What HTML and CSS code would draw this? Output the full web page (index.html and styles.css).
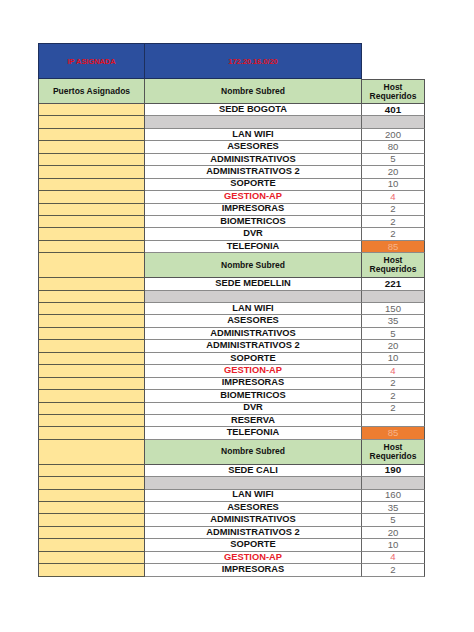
FILE: index.html
```html
<!DOCTYPE html>
<html>
<head>
<meta charset="utf-8">
<link rel="stylesheet" href="styles.css">
</head>
<body>
<div class="sheet">
  <div class="blue c1">IP ASIGNADA</div>
  <div class="blue c2">172.20.16.0/20</div>
  <div class="blank"></div>

  <div class="c1 hdr">Puertos Asignados</div>
  <div class="c2 hdr">Nombre Subred</div>
  <div class="c3 hdr">Host<br>Requeridos</div>

  <div class="y"></div><div class="n sede">SEDE BOGOTA</div><div class="v sede">401</div>
  <div class="y"></div><div class="n gray"></div><div class="v gray"></div>
  <div class="y"></div><div class="n">LAN WIFI</div><div class="v">200</div>
  <div class="y"></div><div class="n">ASESORES</div><div class="v">80</div>
  <div class="y"></div><div class="n">ADMINISTRATIVOS</div><div class="v">5</div>
  <div class="y"></div><div class="n">ADMINISTRATIVOS 2</div><div class="v">20</div>
  <div class="y"></div><div class="n">SOPORTE</div><div class="v">10</div>
  <div class="y"></div><div class="n red">GESTION-AP</div><div class="v red">4</div>
  <div class="y"></div><div class="n">IMPRESORAS</div><div class="v">2</div>
  <div class="y"></div><div class="n">BIOMETRICOS</div><div class="v">2</div>
  <div class="y"></div><div class="n">DVR</div><div class="v">2</div>
  <div class="y"></div><div class="n">TELEFONIA</div><div class="v orange">85</div>

  <div class="y tall"></div><div class="hdr tall">Nombre Subred</div><div class="hdr hv tall">Host<br>Requeridos</div>
  <div class="y"></div><div class="n sede">SEDE MEDELLIN</div><div class="v sede">221</div>
  <div class="y"></div><div class="n gray"></div><div class="v gray"></div>
  <div class="y"></div><div class="n">LAN WIFI</div><div class="v">150</div>
  <div class="y"></div><div class="n">ASESORES</div><div class="v">35</div>
  <div class="y"></div><div class="n">ADMINISTRATIVOS</div><div class="v">5</div>
  <div class="y"></div><div class="n">ADMINISTRATIVOS 2</div><div class="v">20</div>
  <div class="y"></div><div class="n">SOPORTE</div><div class="v">10</div>
  <div class="y"></div><div class="n red">GESTION-AP</div><div class="v red">4</div>
  <div class="y"></div><div class="n">IMPRESORAS</div><div class="v">2</div>
  <div class="y"></div><div class="n">BIOMETRICOS</div><div class="v">2</div>
  <div class="y"></div><div class="n">DVR</div><div class="v">2</div>
  <div class="y"></div><div class="n">RESERVA</div><div class="v"></div>
  <div class="y"></div><div class="n">TELEFONIA</div><div class="v orange">85</div>

  <div class="y tall"></div><div class="hdr tall">Nombre Subred</div><div class="hdr hv tall">Host<br>Requeridos</div>
  <div class="y"></div><div class="n sede">SEDE CALI</div><div class="v sede">190</div>
  <div class="y"></div><div class="n gray"></div><div class="v gray"></div>
  <div class="y"></div><div class="n">LAN WIFI</div><div class="v">160</div>
  <div class="y"></div><div class="n">ASESORES</div><div class="v">35</div>
  <div class="y"></div><div class="n">ADMINISTRATIVOS</div><div class="v">5</div>
  <div class="y"></div><div class="n">ADMINISTRATIVOS 2</div><div class="v">20</div>
  <div class="y"></div><div class="n">SOPORTE</div><div class="v">10</div>
  <div class="y"></div><div class="n red">GESTION-AP</div><div class="v red">4</div>
  <div class="y"></div><div class="n">IMPRESORAS</div><div class="v">2</div>
</div>
</body>
</html>
```

FILE: styles.css
```css
html, body {
  margin: 0;
  padding: 0;
  background: #ffffff;
}
body {
  padding: 43px 0 0 38px;
  font-family: "Liberation Sans", Arial, sans-serif;
}
.sheet {
  display: grid;
  grid-template-columns: 107px 217px 63px;
  grid-template-rows: 36px 25px;
  grid-auto-rows: 12.45px;
  width: 387px;
}
.sheet > div {
  box-sizing: border-box;
  display: flex;
  align-items: center;
  justify-content: center;
  text-align: center;
  line-height: 1.05;
  color: #111;
}
.blue {
  background: #2c4f9e;
  color: #e01020 !important;
  font-size: 7.4px;
  font-weight: bold;
  padding-top: 2px;
  border-top: 1px solid #1d2f5c;
  border-bottom: 1px solid #1d2f5c;
  border-right: 1px solid #1d2f5c;
}
.blue.c1 { border-left: 1px solid #1d2f5c; }
.blank { background: #fff; }
.n {
  background: #fff;
  font-size: 9.3px;
  font-weight: bold;
  border-bottom: 1px solid #8a8a8a;
  border-right: 1px solid #666;
}
.v {
  background: #fff;
  font-size: 9.6px;
  color: #666 !important;
  border-bottom: 1px solid #8a8a8a;
  border-right: 1px solid #555;
}
.hdr {
  background: #c6e0b4;
  font-size: 8.5px;
  font-weight: bold;
  color: #111 !important;
  border-bottom: 1px solid #555;
  border-right: 1px solid #555;
}
.c1.hdr { border-left: 1px solid #555; }
.c3.hdr { border-top: 1px solid #555; }
.y {
  background: #ffe699;
  border-left: 1px solid #555;
  border-right: 1px solid #555;
  border-bottom: 1px solid #5a5a4a;
}
.tall { grid-row: span 2; }
.sede { font-weight: bold; color: #111 !important; }
.v.sede { font-size: 9.8px; }
.gray { background: #d0cece; }
.red { color: #e8202a !important; }
.v.red { color: #ee6a70 !important; }
.orange { background: #ed7d31; color: #f7b489 !important; }
```
